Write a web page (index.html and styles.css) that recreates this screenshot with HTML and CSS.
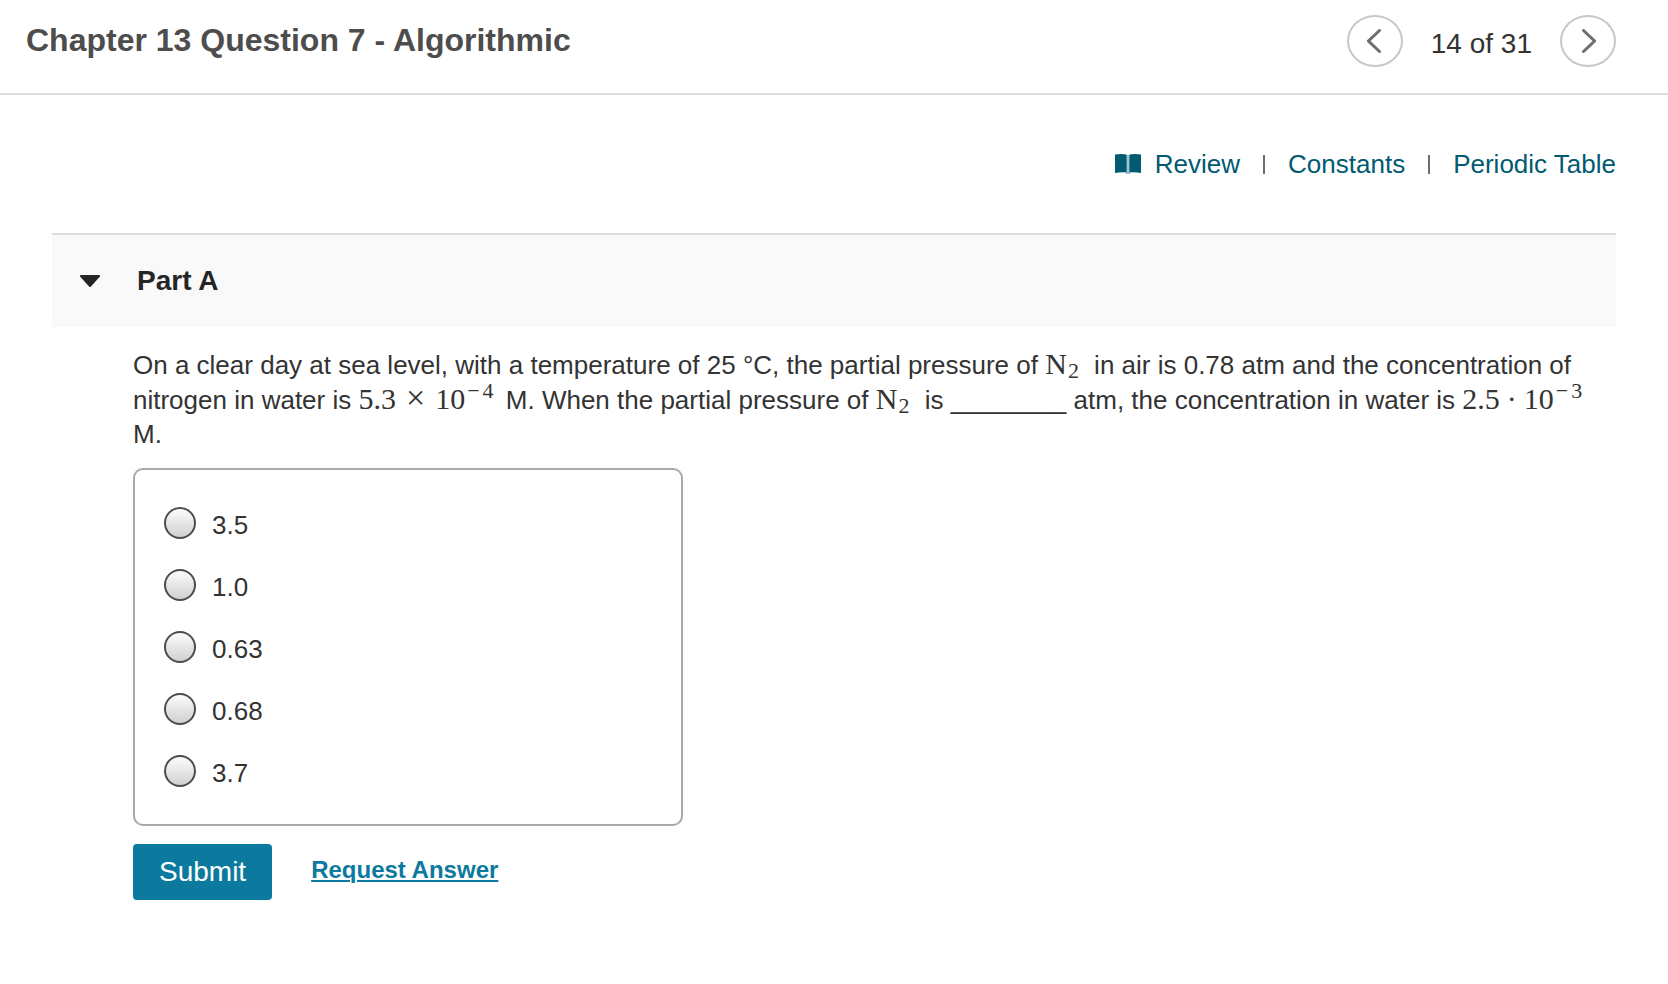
FILE: index.html
```html
<!DOCTYPE html>
<html lang="en">
<head>
<meta charset="utf-8">
<title>Chapter 13 Question 7 - Algorithmic</title>
<link rel="stylesheet" href="styles.css">
</head>
<body>
<header class="topbar">
  <h1 class="title">Chapter 13 Question 7 - Algorithmic</h1>
  <nav class="pager" aria-label="Items">
    <button class="pager-btn" type="button" aria-label="Previous item"><svg width="16" height="24" viewBox="0 0 16 24"><path d="M12.500 1.500L1.500 12L12.500 22.500"/></svg></button>
    <span class="pager-text">14 of 31</span>
    <button class="pager-btn" type="button" aria-label="Next item"><svg width="16" height="24" viewBox="0 0 16 24"><path d="M3.500 1.500L14.500 12L3.500 22.500"/></svg></button>
  </nav>
</header>
<main class="content">
  <nav class="tools" aria-label="Resources">
    <a class="tool" href="#review"><svg class="book" width="26" height="21" viewBox="0 0 26 21"><path class="spine" d="M11 1h4v19h-4z"/><path d="M0 .600Q6 -.500 11.600 .600V18.600Q6 17.800 0 19Z"/><path d="M14.400 .600Q20 -.500 26 .600V19Q20 17.800 14.400 18.600Z"/></svg>Review</a>
    <span class="sep"></span>
    <a class="tool" href="#constants">Constants</a>
    <span class="sep"></span>
    <a class="tool" href="#periodic">Periodic Table</a>
  </nav>
  <section class="part">
    <h2 class="part-head">
      <button class="part-toggle" type="button" aria-expanded="true"><svg class="caret" width="22" height="13" viewBox="0 0 22 13"><path d="M2 1H20L11 11Z"/></svg>Part A</button>
    </h2>
    <form class="part-body">
      <p class="question">On a clear day at sea level, with a temperature of 25 °C, the partial pressure of <span class="math chem">N<sub>2</sub></span> in air is 0.78 atm and the concentration of nitrogen in water is <span class="math power">5.3<span class="times">×</span>10<sup><span class="minus">−</span>4</sup></span> M. When the partial pressure of <span class="math chem">N<sub>2</sub></span> is ________ atm, the concentration in water is <span class="math">2.5<span class="dot">·</span>10<sup><span class="minus">−</span>3</sup></span> M.</p>
      <div class="options" role="radiogroup" aria-label="Answer choices">
        <label class="option"><input class="radio" type="radio" name="answer"><span>3.5</span></label>
        <label class="option"><input class="radio" type="radio" name="answer"><span>1.0</span></label>
        <label class="option"><input class="radio" type="radio" name="answer"><span>0.63</span></label>
        <label class="option"><input class="radio" type="radio" name="answer"><span>0.68</span></label>
        <label class="option"><input class="radio" type="radio" name="answer"><span>3.7</span></label>
      </div>
      <div class="actions">
        <button class="submit" type="button">Submit</button>
        <a class="request" href="#request">Request Answer</a>
      </div>
    </form>
  </section>
</main>
</body>
</html>
```
FILE: styles.css
```css
* { box-sizing: border-box; }
body {
  margin: 0;
  background: #fff;
  color: #333;
  font-family: "Liberation Sans", Arial, Helvetica, sans-serif;
  font-size: 26px;
  line-height: 32px;
}
button { font: inherit; cursor: pointer; }
.topbar {
  display: flex;
  justify-content: space-between;
  align-items: flex-start;
  padding: 15px 52px 26px 26px;
  border-bottom: 2px solid #ddd;
}
.title {
  margin: 0;
  padding-top: 7px;
  color: #4d4d4d;
  font-size: 32px;
  line-height: 36px;
}
.pager { display: flex; align-items: center; gap: 28px; }
.pager-btn {
  display: flex;
  align-items: center;
  justify-content: center;
  width: 56px;
  height: 52px;
  padding: 0;
  border: 2px solid #c7c7c7;
  border-radius: 50%;
  background: #fff;
}
.pager-btn svg { fill: none; stroke: #6a7070; stroke-width: 3; stroke-linecap: round; }
.pager-text { padding-top: 6px; font-size: 28px; }
.content { padding: 53px 52px; }
.tools { display: flex; justify-content: flex-end; align-items: center; gap: 23px; }
.tool { display: flex; align-items: center; gap: 14px; color: #005a70; text-decoration: none; }
.book { fill: #005a70; }
.book .spine { fill: #a3c3cb; }
.sep { width: 2px; height: 19px; background: #6a7070; }
.part { margin-top: 53px; }
.part-head { margin: 0; border-top: 2px solid #ddd; background: #f9f9f9; }
.part-toggle {
  display: flex;
  align-items: center;
  gap: 36px;
  width: 100%;
  padding: 30px 27px;
  border: 0;
  background: none;
  color: #252525;
  font-size: 28px;
  font-weight: bold;
}
.caret { fill: #252525; stroke: #252525; stroke-width: 2; stroke-linejoin: round; }
.part-body { padding: 20px 0 0 81px; }
.question { margin: 0; padding-right: 24px; line-height: 34px; }
.math { font-family: "Liberation Serif", "Times New Roman", serif; font-size: 30px; white-space: nowrap; }
.math sub, .math sup { font-size: 22px; line-height: 0; }
.math sub { margin-left: 1px; vertical-align: -4px; }
.math sup { margin-left: 2px; vertical-align: 11px; }
.minus { margin-right: 3px; }
.chem { margin-right: 8px; }
.power { margin-right: 5px; }
.times { margin: 0 10px; font-size: 34px; line-height: 0; }
.dot { margin: 0 7px; }
.options {
  display: flex;
  flex-direction: column;
  gap: 30px;
  max-width: 550px;
  margin-top: 17px;
  padding: 37px 29px;
  border: 2px solid #a9a9a9;
  border-radius: 10px;
}
.option { display: flex; align-items: center; gap: 16px; }
.option span { padding-top: 4px; line-height: 28px; }
.radio {
  appearance: none;
  width: 32px;
  height: 32px;
  margin: 0;
  border: 2px solid #4d4d4d;
  border-radius: 50%;
  background: linear-gradient(#fcfcfc, #d0d0d0);
}
.radio:checked { background: radial-gradient(#4d4d4d 35%, #eee 40%); }
.actions { display: flex; align-items: center; gap: 39px; margin-top: 18px; }
.submit {
  padding: 12px 26px;
  border: 0;
  border-radius: 4px;
  background: #0b7a9e;
  color: #fff;
  font-size: 28px;
}
.request { padding-bottom: 4px; color: #0b7a9e; font-size: 24px; font-weight: bold; text-underline-offset: 2px; text-decoration-thickness: 2px; text-decoration-skip-ink: auto; }
```
